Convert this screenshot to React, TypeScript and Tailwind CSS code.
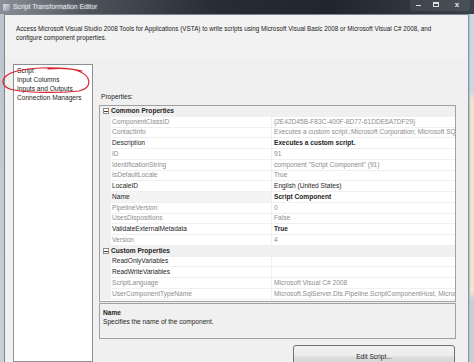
import React from "react";

type Prop = {
  name: string;
  value: string;
  dim?: boolean;
  bold?: boolean;
  selected?: boolean;
};

const common: Prop[] = [
  { name: "ComponentClassID", value: "{2E42D45B-F83C-400F-8D77-61DDE6A7DF29}", dim: true },
  {
    name: "ContactInfo",
    value: "Executes a custom script.;Microsoft Corporation; Microsoft SQL Server; Microsoft Corporation; All Rights Reserved",
    dim: true,
  },
  { name: "Description", value: "Executes a custom script.", bold: true },
  { name: "ID", value: "91", dim: true },
  { name: "IdentificationString", value: 'component "Script Component" (91)', dim: true },
  { name: "IsDefaultLocale", value: "True", dim: true },
  { name: "LocaleID", value: "English (United States)" },
  { name: "Name", value: "Script Component", bold: true, selected: true },
  { name: "PipelineVersion", value: "0", dim: true },
  { name: "UsesDispositions", value: "False", dim: true },
  { name: "ValidateExternalMetadata", value: "True", bold: true },
  { name: "Version", value: "4", dim: true },
];

const custom: Prop[] = [
  { name: "ReadOnlyVariables", value: "" },
  { name: "ReadWriteVariables", value: "" },
  { name: "ScriptLanguage", value: "Microsoft Visual C# 2008", dim: true },
  {
    name: "UserComponentTypeName",
    value: "Microsoft.SqlServer.Dts.Pipeline.ScriptComponentHost, Microsoft.SqlServer.TxScript",
    dim: true,
  },
];

const pages = ["Script", "Input Columns", "Inputs and Outputs", "Connection Managers"];

function Category({ label }: { label: string }) {
  return (
    <div className="flex h-[10.75px] items-center bg-[#f0f0f0]">
      <div className="flex w-[11px] shrink-0 items-center justify-center">
        <span className="flex h-[6px] w-[6px] items-center justify-center border border-[#8c8c8c] bg-white">
          <span className="h-px w-[4px] bg-[#404040]" />
        </span>
      </div>
      <span className="font-bold text-[#1e1e1e]">{label}</span>
    </div>
  );
}

function Row({ p }: { p: Prop }) {
  return (
    <div className="flex h-[10.75px]">
      <div className="w-[11px] shrink-0 bg-[#f0f0f0]" />
      <div
        className={
          "flex w-[161px] shrink-0 items-center border-b border-r border-[#f0f0f0] pl-px " +
          (p.selected ? "bg-[#f4f4f4] " : "bg-white ") +
          (p.dim ? "text-[#8d8d8d]" : "text-[#1e1e1e]")
        }
      >
        {p.name}
      </div>
      <div
        className={
          "flex min-w-0 flex-1 items-center overflow-hidden whitespace-nowrap border-b border-[#f0f0f0] bg-white pl-[2px] " +
          (p.dim ? "text-[#8d8d8d] " : "text-[#1e1e1e] ") +
          (p.bold ? "font-bold" : "")
        }
      >
        {p.value}
      </div>
    </div>
  );
}

export default function App() {
  return (
    <div className="relative flex h-[362px] w-[474px] flex-col overflow-hidden bg-[#c3cbd3] font-['Liberation_Sans',Arial,sans-serif] text-[6.6px] leading-[10px] text-[#1e1e1e]">
      {/* Title bar */}
      <div className="flex h-[14px] shrink-0 items-center bg-[linear-gradient(90deg,#8a9098_0%,#4d545c_18%,#262d35_45%,#1f262e_70%,#3b424a_100%)]">
        <div className="ml-[3px] h-[7px] w-[7px] rounded-[1px] bg-[linear-gradient(135deg,#dfe6ee,#8893a0)]" />
        <span className="ml-[3px] text-[6.8px] text-[#e6e9ec] [text-shadow:0_0_3px_#ffffff66]">
          Script Transformation Editor
        </span>
        <div className="ml-auto mr-[4px] flex h-[11px] items-start self-start rounded-b-[2px] bg-[#ffffff14]">
          <div className="flex h-[9px] w-[17px] items-end justify-center pb-[3px]">
            <span className="h-px w-[5px] bg-[#e0e0e0]" />
          </div>
          <div className="flex h-[9px] w-[17px] items-center justify-center">
            <span className="h-[5px] w-[6px] border border-t-2 border-[#e0e0e0]" />
          </div>
          <div className="flex h-[9px] w-[26px] items-center justify-center text-[8px] font-bold leading-[9px] text-[#e8e8e8]">
            x
          </div>
        </div>
      </div>

      <div className="flex min-h-0 flex-1">
        {/* Left frame */}
        <div className="w-[4px] shrink-0 bg-[linear-gradient(180deg,#bcc5ce,#c9d0d7)]" />

        {/* Client */}
        <div className="flex w-[464px] shrink-0 flex-col border-l border-t border-[#7d858d] bg-[#f0f0f0]">
          {/* Header */}
          <div className="h-[43px] shrink-0 bg-[#f2f2f2] pl-[11px] pr-[10px] pt-[9px] text-[6.3px] leading-[9px] text-[#1a1a1a]">
            Access Microsoft Visual Studio 2008 Tools for Applications (VSTA) to write scripts using Microsoft Visual
            Basic 2008 or Microsoft Visual C# 2008, and configure component properties.
          </div>

          <div className="flex min-h-0 flex-1">
            {/* Page list */}
            <div className="ml-[8px] mt-[6px] w-[80px] shrink-0 border border-[#8e8f8f] bg-white pl-[3px] pt-px leading-[9px]">
              {pages.map((p) => (
                <div key={p} className="h-[9px] whitespace-nowrap">
                  {p}
                </div>
              ))}
            </div>

            {/* Properties */}
            <div className="ml-[6px] flex w-[357px] shrink-0 flex-col">
              <div className="mt-[34px] h-[10px] pl-[2px]">Properties:</div>
              <div className="mt-[3px] h-[197px] shrink-0 overflow-hidden border border-[#a0a0a0] bg-white">
                <Category label="Common Properties" />
                {common.map((p) => (
                  <Row key={p.name} p={p} />
                ))}
                <Category label="Custom Properties" />
                {custom.map((p) => (
                  <Row key={p.name} p={p} />
                ))}
              </div>
              <div className="mt-px h-[36px] shrink-0 border border-[#a0a0a0] bg-[#f0f0f0] pl-[3px] pt-[4px] leading-[9px]">
                <div className="font-bold">Name</div>
                <div>Specifies the name of the component.</div>
              </div>
              <div className="mt-[6px] flex h-[23px] w-[162px] shrink-0 items-center justify-center self-end rounded-[3px] border border-[#707070] bg-[linear-gradient(180deg,#f2f2f2_0%,#ebebeb_48%,#dddddd_52%,#cfcfcf_100%)] mr-px">
                Edit Script...
              </div>
            </div>
          </div>
        </div>

        {/* Right frame / window behind */}
        <div className="flex w-[6px] shrink-0">
          <div className="w-px bg-[#8d949b]" />
          <div className="w-px bg-[#a9c4de]" />
          <div className="flex-1 bg-[linear-gradient(180deg,#cdd6df_0%,#cdd6df_22%,#efe3c8_25%,#efe3c8_80%,#c9ced4_82%,#c9ced4_100%)]" />
        </div>
      </div>

      {/* Red freehand annotation */}
      <svg className="pointer-events-none absolute left-0 top-0" width="474" height="362" viewBox="0 0 474 362">
        <path
          d="M82 71 C60 66 22 67 9 74 C0 79 1 88 14 90 C30 93 64 93 79 91 C92 88 93 76 77 70.5 C70 68.5 60 68 48 69"
          fill="none"
          stroke="#d8232f"
          strokeWidth="1.2"
          strokeLinecap="round"
        />
      </svg>
    </div>
  );
}
